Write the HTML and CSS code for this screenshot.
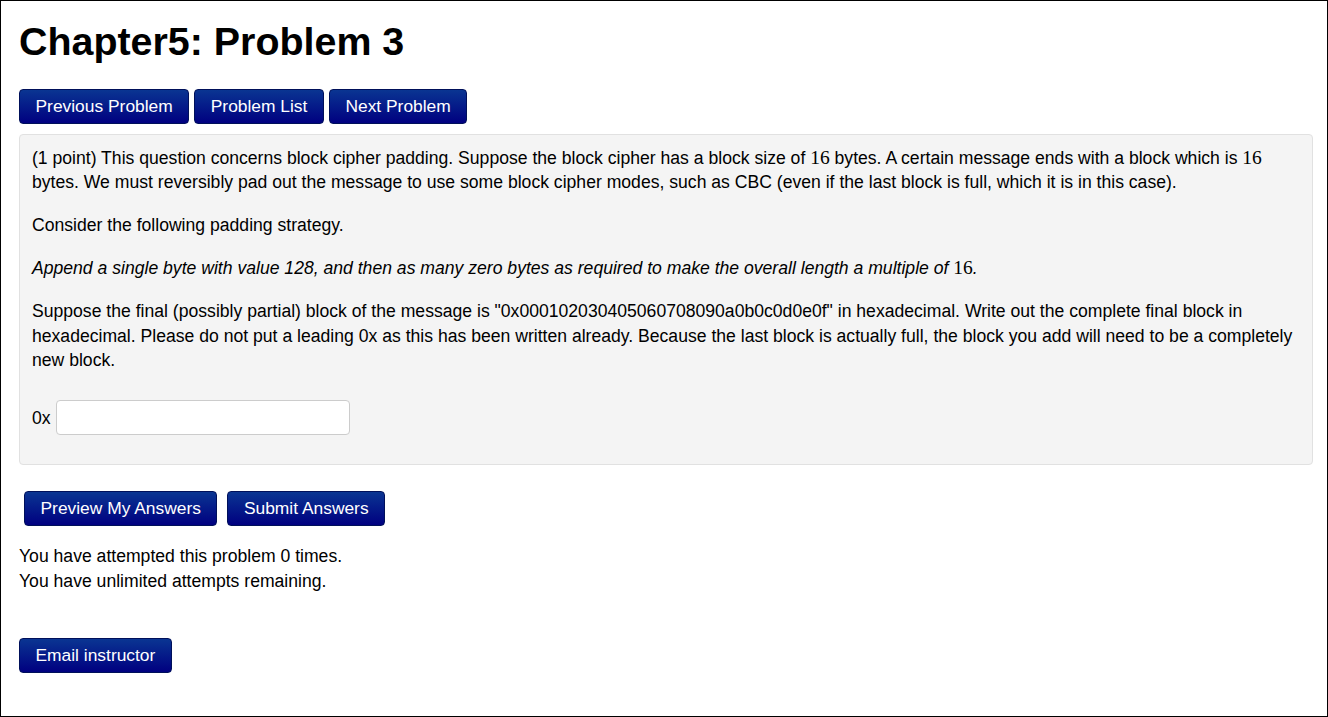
FILE: index.html
```html
<!DOCTYPE html>
<html>
<head>
    <title>Chapter5: Problem 3</title>
    <meta charset="UTF-8">
    <link rel="stylesheet" href="styles.css">
</head>
<body>
<div class="page">
    <h1>Chapter5: Problem 3</h1>

    <div class="nav">
        <button class="btn">Previous Problem</button>
        <button class="btn">Problem List</button>
        <button class="btn">Next Problem</button>
    </div>

    <div class="problem">
        <p>(1 point) This question concerns block cipher padding. Suppose the block cipher has a block size of <span class="math">16</span> bytes. A certain message ends with a block which is <span class="math">16</span> bytes. We must reversibly pad out the message to use some block cipher modes, such as CBC (even if the last block is full, which it is in this case).</p>
        <p>Consider the following padding strategy.</p>
        <p><em>Append a single byte with value 128, and then as many zero bytes as required to make the overall length a multiple of <span class="math">16</span>.</em></p>
        <p>Suppose the final (possibly partial) block of the message is "0x000102030405060708090a0b0c0d0e0f" in hexadecimal. Write out the complete final block in hexadecimal. Please do not put a leading 0x as this has been written already. Because the last block is actually full, the block you add will need to be a completely new block.</p>
        <div class="answer">
            <label for="ans">0x</label>
            <input type="text" id="ans">
        </div>
    </div>

    <div class="submit">
        <button class="btn">Preview My Answers</button>
        <button class="btn">Submit Answers</button>
    </div>

    <div class="attempts">
        You have attempted this problem 0 times.<br>
        You have unlimited attempts remaining.
    </div>

    <div class="email">
        <button class="btn">Email instructor</button>
    </div>
</div>
</body>
</html>
```

FILE: styles.css
```css
html, body {
    height: 100%;
}
body {
    margin: 0;
    font-family: "Liberation Sans", Arial, sans-serif;
    font-size: 17.6px;
    color: #000;
    background: #fff;
}
.page {
    box-sizing: border-box;
    height: 100%;
    border: 1px solid #000;
    padding: 0 14px 0 18px;
}
h1 {
    font-size: 39.4px;
    font-weight: bold;
    line-height: 45px;
    margin: 18px 0 25px;
}
.btn {
    font-family: "Liberation Sans", Arial, sans-serif;
    font-size: 17.4px;
    line-height: 19px;
    color: #fff;
    padding: 7px 15.5px;
    border: 1px solid #00105a;
    border-radius: 4px;
    background: linear-gradient(to bottom, #0a3592, #000080);
    cursor: pointer;
}
.nav {
    display: flex;
    gap: 5px;
}
.problem {
    margin-top: 10px;
    padding: 11px 12px 29px;
    background-color: #f4f4f4;
    border: 1px solid #e1e1e1;
    border-radius: 4px;
    line-height: 24.4px;
}
.problem p {
    margin: 0 0 18.6px;
}
.math {
    font-family: "Liberation Serif", "Times New Roman", serif;
    font-style: normal;
    font-size: 19.5px;
}
.answer {
    display: flex;
    align-items: center;
    gap: 5px;
    padding-top: 9px;
}
.answer input {
    box-sizing: border-box;
    width: 294px;
    height: 35px;
    border: 1px solid #ccc;
    border-radius: 4px;
    background: #fff;
    font-size: 16px;
    padding: 4px 6px;
}
.submit {
    display: flex;
    gap: 10px;
    margin: 26px 0 0 5px;
}
.attempts {
    margin-top: 18px;
    line-height: 24.6px;
}
.email {
    margin-top: 45px;
}
```
